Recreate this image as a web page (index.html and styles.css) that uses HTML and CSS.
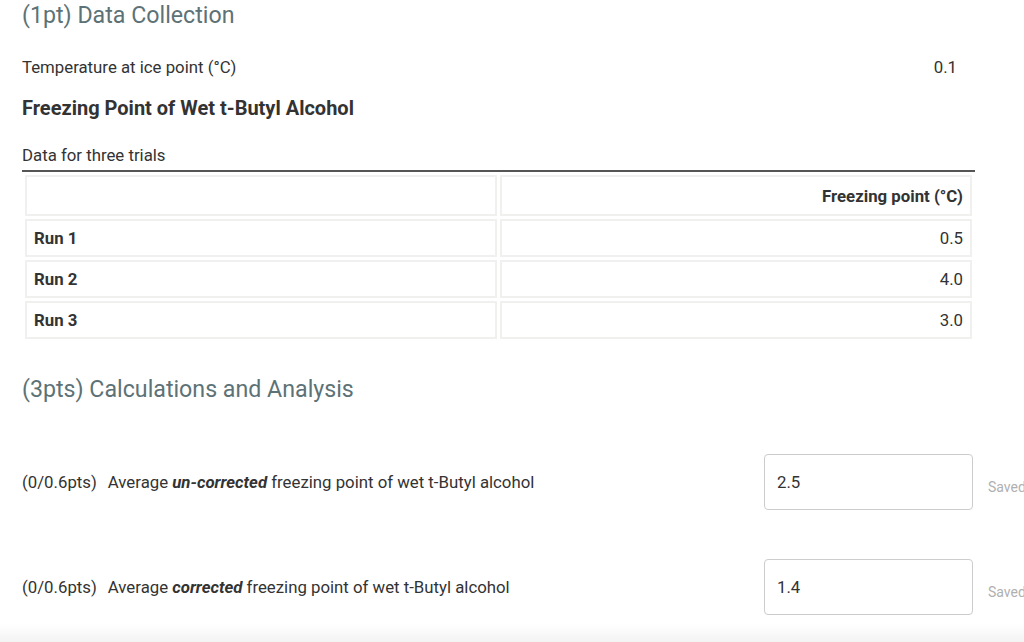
FILE: index.html
```html
<!DOCTYPE html>
<html>
<head>
<meta charset="utf-8">
<link rel="stylesheet" href="styles.css">
</head>
<body>
<div class="page">
  <h2 class="section-title first">(1pt) Data Collection</h2>
  <div class="value-row">
    <span class="label">Temperature at ice point (°C)</span>
    <span class="value">0.1</span>
  </div>
  <h3 class="sub-title">Freezing Point of Wet t-Butyl Alcohol</h3>
  <div class="caption">Data for three trials</div>
  <table class="data-table">
    <thead>
      <tr><th class="row-head"></th><th class="num">Freezing point (°C)</th></tr>
    </thead>
    <tbody>
      <tr><th class="row-head">Run 1</th><td class="num">0.5</td></tr>
      <tr><th class="row-head">Run 2</th><td class="num">4.0</td></tr>
      <tr><th class="row-head">Run 3</th><td class="num">3.0</td></tr>
    </tbody>
  </table>
  <h2 class="section-title second">(3pts) Calculations and Analysis</h2>
  <div class="question q1">
    <div class="q-text"><span class="pts">(0/0.6pts)</span>Average <b><i>un-corrected</i></b> freezing point of wet t-Butyl alcohol</div>
    <div class="answer">2.5</div>
    <div class="saved">Saved</div>
  </div>
  <div class="question q2">
    <div class="q-text"><span class="pts">(0/0.6pts)</span>Average <b><i>corrected</i></b> freezing point of wet t-Butyl alcohol</div>
    <div class="answer">1.4</div>
    <div class="saved">Saved</div>
  </div>
</div>
<div class="bottom-fade"></div>
</body>
</html>
```
FILE: styles.css
```css
html, body {
  margin: 0;
  padding: 0;
  background: #fff;
  overflow: hidden;
}
body {
  font-family: Roboto, "Liberation Sans", sans-serif;
  color: #333;
  font-size: 16.8px;
  height: 642px;
  position: relative;
}
.page {
  width: 953px;
  padding-left: 22px;
}
.section-title {
  font-size: 23.2px;
  line-height: 28px;
  font-weight: 400;
  color: #5d7276;
  margin: 0;
  white-space: nowrap;
}
.section-title.first {
  margin-top: 1px;
}
.section-title.second {
  margin-top: 33px;
}
.value-row {
  display: flex;
  justify-content: space-between;
  margin-top: 28px;
  line-height: 20px;
}
.value-row .value {
  padding-right: 18px;
}
.sub-title {
  margin: 18px 0 0;
  font-size: 20px;
  line-height: 26px;
  font-weight: 700;
  color: #333;
}
.caption {
  margin-top: 24px;
  line-height: 20px;
}
.data-table {
  margin-top: 5px;
  width: 953px;
  border-collapse: separate;
  border-spacing: 3px;
  border-top: 2px solid #555;
  table-layout: fixed;
}
.data-table th, .data-table td {
  border: 2px solid #f0f0ee;
  font-size: 16.8px;
  line-height: 20px;
  padding: 7px 7px;
  color: #333;
}
.data-table thead th {
  height: 21px;
  padding-top: 8px;
  padding-bottom: 8px;
}
.data-table .row-head {
  text-align: left;
  font-weight: 700;
}
.data-table .num {
  text-align: right;
}
.data-table th.num {
  font-weight: 700;
}
.question {
  display: flex;
  align-items: center;
}
.question.q1 {
  margin-top: 51px;
}
.question.q2 {
  margin-top: 49px;
}
.q-text {
  flex: 1;
  line-height: 20px;
  white-space: nowrap;
}
.pts {
  margin-right: 11px;
}
.answer {
  width: 195px;
  height: 54px;
  margin-right: 2px;
  border: 1px solid #cccccc;
  border-radius: 4px;
  padding-left: 12px;
  display: flex;
  align-items: center;
  font-size: 16.8px;
  color: #333;
}
.saved {
  margin-left: 13px;
  margin-right: -13px;
  width: 0;
  white-space: nowrap;
  font-size: 14px;
  color: #b0b0b0;
  padding-top: 9px;
}
.bottom-fade {
  position: absolute;
  left: 0;
  right: 0;
  bottom: 0;
  height: 18px;
  background: linear-gradient(to bottom, rgba(245,245,245,0), #f3f3f3);
}
```
